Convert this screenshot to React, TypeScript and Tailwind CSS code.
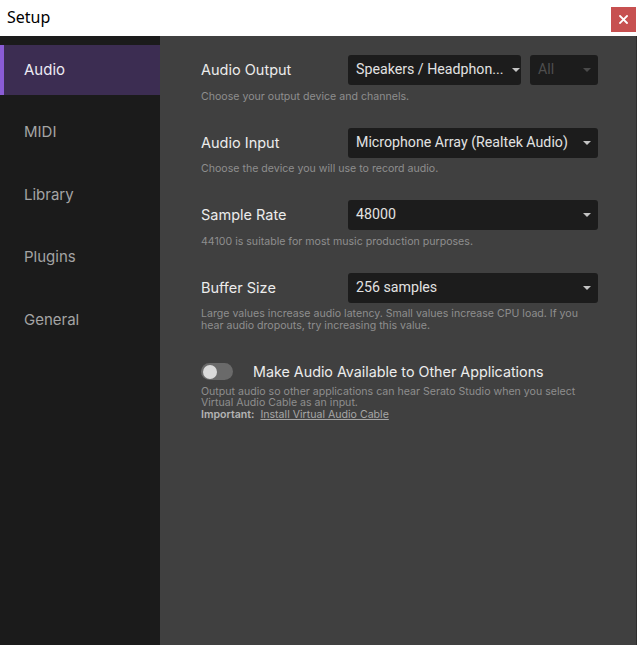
import { useState } from 'react'

const navItems = ['Audio', 'MIDI', 'Library', 'Plugins', 'General']

function Caret({ dim = false }: { dim?: boolean }) {
	return (
		<svg width="8" height="4" viewBox="0 0 8 4" className="shrink-0">
			<path d="M0 0h8L4 4z" fill={dim ? '#4a4a4a' : '#c4c4c4'} />
		</svg>
	)
}

function Select({
	value,
	width,
	dim = false,
}: {
	value: string
	width: string
	dim?: boolean
}) {
	return (
		<div
			className={`${width} flex h-[30px] items-center justify-between gap-2 rounded-[3px] bg-[#1c1c1c] pl-2 pr-[7px] text-[14.2px] ${
				dim ? 'text-[#4e4e4e]' : 'text-[#e2e2e2]'
			}`}
			style={{ fontFamily: 'Roboto, "Noto Sans", sans-serif' }}
		>
			<span className="whitespace-nowrap">{value}</span>
			<Caret dim={dim} />
		</div>
	)
}

function Section({
	label,
	children,
	desc,
}: {
	label: string
	children: React.ReactNode
	desc: React.ReactNode
}) {
	return (
		<div>
			<div className="flex h-[30px] items-center">
				<div className="w-[147px] text-[14.5px] text-[#ececec]">{label}</div>
				{children}
			</div>
			<p className="mt-[5.5px] text-[10.6px] leading-[11.5px] text-[#8e8e8e]">
				{desc}
			</p>
		</div>
	)
}

export default function App() {
	const [active, setActive] = useState('Audio')
	const [shared, setShared] = useState(false)

	return (
		<div
			className="flex h-[645px] w-[637px] flex-col overflow-hidden bg-white"
			style={{ fontFamily: 'Inter, "Noto Sans", sans-serif' }}
		>
			<div className="flex h-[36px] shrink-0 items-start justify-between bg-white">
				<span
					className="mt-[7px] ml-[7px] text-[16px] leading-[20px] text-black"
					style={{ fontFamily: '"Noto Sans", "Open Sans", sans-serif' }}
				>
					Setup
				</span>
				<button className="mt-[7px] mr-[1px] flex h-[25px] w-[25px] items-center justify-center bg-[#c75050]">
					<svg width="9" height="9" viewBox="0 0 9 9">
						<path
							d="M1 1l7 7M8 1L1 8"
							stroke="white"
							strokeWidth="1.8"
							strokeLinecap="square"
						/>
					</svg>
				</button>
			</div>

			<div className="flex flex-1">
				<div className="flex w-[160px] shrink-0 flex-col gap-[12.5px] bg-[#1b1b1b] pt-[9px]">
					{navItems.map((item) => {
						const isActive = item === active
						return (
							<div
								key={item}
								onClick={() => setActive(item)}
								className={`flex h-[50px] cursor-pointer items-center border-l-4 pl-5 text-[15px] ${
									isActive
										? 'border-[#8a5cd6] bg-[#3c2d52] text-[#eceaf2]'
										: 'border-transparent text-[#a4a4a4]'
								}`}
							>
								{item}
							</div>
						)
					})}
				</div>

				<div className="flex flex-1 flex-col gap-[25.5px] border-r border-[#2e2e2e] bg-[#404040] pt-[19px] pl-[41px] pr-[38px]">
					<Section
						label="Audio Output"
						desc="Choose your output device and channels."
					>
						<Select value="Speakers / Headphon..." width="w-[173px]" />
						<div className="ml-[9px]">
							<Select value="All" width="w-[68px]" dim />
						</div>
					</Section>

					<Section
						label="Audio Input"
						desc="Choose the device you will use to record audio."
					>
						<Select
							value="Microphone Array (Realtek Audio)"
							width="w-[250px]"
						/>
					</Section>

					<Section
						label="Sample Rate"
						desc="44100 is suitable for most music production purposes."
					>
						<Select value="48000" width="w-[250px]" />
					</Section>

					<Section
						label="Buffer Size"
						desc="Large values increase audio latency. Small values increase CPU load. If you hear audio dropouts, try increasing this value."
					>
						<Select value="256 samples" width="w-[250px]" />
					</Section>

					<div className="mt-[5px]">
						<div className="flex h-[20px] items-center">
							<button
								onClick={() => setShared(!shared)}
								className={`flex h-[17px] w-[32px] items-center rounded-full px-[2px] ${
									shared ? 'justify-end bg-[#8a5cd6]' : 'bg-[#6a6a6a]'
								}`}
							>
								<span className="h-[14px] w-[14px] rounded-full bg-[#dadada]" />
							</button>
							<span className="ml-[20px] text-[14.3px] text-[#ececec]">
								Make Audio Available to Other Applications
							</span>
						</div>
						<p className="mt-[4px] text-[10.6px] leading-[11.5px] text-[#8e8e8e]">
							Output audio so other applications can hear Serato Studio when
							you select Virtual Audio Cable as an input.
						</p>
						<p className="text-[10.6px] leading-[11.5px] text-[#8e8e8e]">
							<span className="font-semibold text-[#b4b4b4]">Important:</span>
							<a className="ml-[6px] cursor-pointer text-[#a6a6a6] underline">
								Install Virtual Audio Cable
							</a>
						</p>
					</div>
				</div>
			</div>
		</div>
	)
}
